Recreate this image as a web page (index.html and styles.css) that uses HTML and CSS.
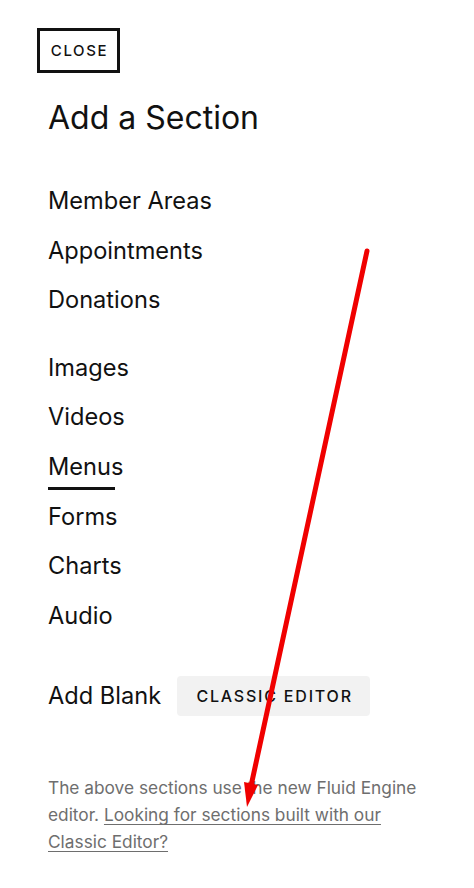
FILE: index.html
```html
<!DOCTYPE html>
<html>
<head>
<meta charset="utf-8">
<link rel="stylesheet" href="styles.css">
</head>
<body>
<div class="panel">
  <div class="top">
    <button class="close">CLOSE</button>
  </div>
  <h1 class="title">Add a Section</h1>
  <ul class="group">
    <li>Member Areas</li>
    <li>Appointments</li>
    <li>Donations</li>
  </ul>
  <ul class="group">
    <li>Images</li>
    <li>Videos</li>
    <li class="active">Menus</li>
    <li>Forms</li>
    <li>Charts</li>
    <li>Audio</li>
  </ul>
  <div class="blank-row">
    <span class="blank">Add Blank</span>
    <button class="classic">CLASSIC EDITOR</button>
  </div>
  <p class="note">The above sections use the new Fluid Engine editor. <a href="#">Looking for sections built with our Classic Editor?</a></p>
</div>
<svg class="arrow" width="474" height="888" viewBox="0 0 474 888">
  <line x1="367" y1="251" x2="251" y2="786" stroke="#f00000" stroke-width="5" stroke-linecap="round"/>
  <polygon points="244,782 258,785 247,807" fill="#f00000"/>
</svg>
</body>
</html>
```
FILE: styles.css
```css
* { box-sizing: border-box; }
html, body { margin: 0; padding: 0; background: #fff; }
body {
  font-family: Inter, "Liberation Sans", sans-serif;
  color: #111;
  width: 474px;
  height: 888px;
  overflow: hidden;
  position: relative;
}
.panel {
  padding: 28px 0 0 48px;
  display: flex;
  flex-direction: column;
}
.top { margin-left: -11px; }
.close {
  display: block;
  width: 83px;
  height: 45px;
  border: 3px solid #111;
  background: #fff;
  font-family: Inter, "Liberation Sans", sans-serif;
  font-size: 15px;
  font-weight: 500;
  letter-spacing: 1.6px;
  color: #111;
  padding: 0 0 0 2px;
}
.title {
  margin: 25px 0 0 0;
  font-size: 32px;
  font-weight: 400;
  line-height: 40px;
  letter-spacing: 0;
}
.group {
  list-style: none;
  margin: 0;
  padding: 0;
}
.group:first-of-type { margin-top: 48px; }
.group + .group { margin-top: 18px; }
.group li {
  font-size: 23.6px;
  line-height: 30px;
  height: 49.6px;
}
.group li.active {
  position: relative;
}
.group li.active::after {
  content: "";
  position: absolute;
  left: 0;
  top: 35px;
  width: 67px;
  height: 3px;
  background: #111;
}
.blank-row {
  display: flex;
  align-items: center;
  gap: 16px;
  margin-top: 26px;
}
.blank { font-size: 23.6px; line-height: 30px; }
.classic {
  height: 40px;
  width: 193px;
  border: none;
  border-radius: 4px;
  background: #f2f2f2;
  font-family: Inter, "Liberation Sans", sans-serif;
  font-size: 16px;
  font-weight: 500;
  letter-spacing: 1.8px;
  color: #111;
  padding: 0 0 0 2px;
}
.note {
  margin: 58px 0 0 0;
  width: 390px;
  font-size: 17.3px;
  line-height: 27px;
  color: #6e6e6e;
}
.note a { color: #6e6e6e; text-decoration: underline; text-underline-offset: 3px; text-decoration-thickness: 1px; }
.arrow {
  position: absolute;
  left: 0;
  top: 0;
  pointer-events: none;
}
```
